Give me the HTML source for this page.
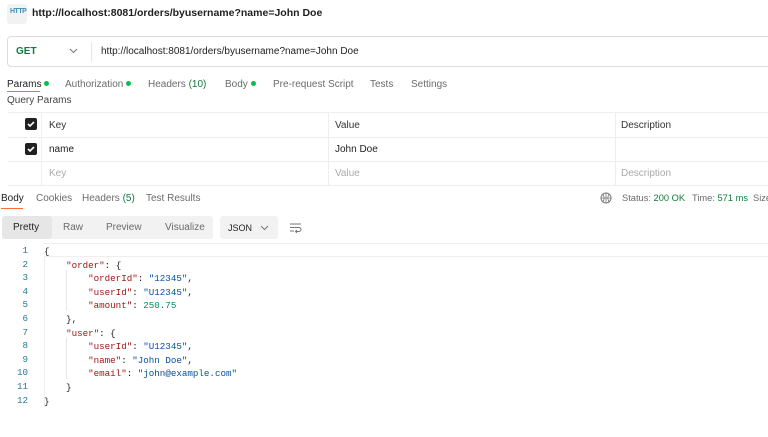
<!DOCTYPE html>
<html><head><meta charset="utf-8"><style>
*{margin:0;padding:0;box-sizing:border-box}
body{width:768px;height:437px;overflow:hidden;background:#fff;font-family:"Liberation Sans",sans-serif;font-size:10px;color:#212121;position:relative}
.a{position:absolute;white-space:nowrap}
.g{color:#6b6b6b}
.dot{display:inline-block;width:5px;height:5px;border-radius:50%;background:#0cbb52;margin-left:3px;vertical-align:1px}
.cb{position:absolute;width:12px;height:12px;background:#212121;border-radius:2px}
.cb svg{position:absolute;left:1px;top:1px}
.code{font-family:"Liberation Mono",monospace;font-size:9.2px;white-space:pre}
.k{color:#a31515}.s{color:#0451a5}.n{color:#098658}
.ln{position:absolute;width:28px;text-align:right;color:#237893;font-family:"Liberation Mono",monospace;font-size:9.2px}
</style></head><body>
<div class="a" style="left:7px;top:4px;width:20px;height:20px;background:#f2f2f2;border-radius:3px"></div>
<div class="a" style="left:10px;top:8px;font-size:7px;font-weight:bold;color:#3a8fb7;letter-spacing:-0.5px">HTTP</div>
<div class="a" style="left:32px;top:7px;font-size:10.5px;font-weight:bold">http://localhost:8081/orders/byusername?name=John Doe</div>

<div class="a" style="left:7px;top:36px;width:770px;height:31px;border:1px solid #dcdcdc;border-radius:4px"></div>
<div class="a" style="left:16px;top:46px;font-weight:bold;color:#0f7b3d">GET</div>
<svg class="a" style="left:69px;top:48px" width="9" height="6"><path d="M1 1l3.5 3.5L8 1" stroke="#777" fill="none"/></svg>
<div class="a" style="left:91px;top:42px;width:1px;height:20px;background:#e5e5e5"></div>
<div class="a" style="left:101px;top:46px">http://localhost:8081/orders/byusername?name=John Doe</div>

<div class="a" style="left:7px;top:79px">Params<span class="dot"></span></div>
<div class="a g" style="left:65px;top:79px">Authorization<span class="dot"></span></div>
<div class="a g" style="left:148px;top:79px">Headers <span style="color:#0f7b3d">(10)</span></div>
<div class="a g" style="left:225px;top:79px">Body<span class="dot"></span></div>
<div class="a g" style="left:273px;top:79px">Pre-request Script</div>
<div class="a g" style="left:370px;top:79px">Tests</div>
<div class="a g" style="left:411px;top:79px">Settings</div>
<div class="a" style="left:7px;top:91px;width:33px;height:1px;background:#ff6c37"></div>
<div class="a" style="left:7px;top:95px;color:#444">Query Params</div>

<div class="a" style="left:8px;top:112px;width:770px;height:74px;border-top:1px solid #eee;border-bottom:1px solid #eee"></div>
<div class="a" style="left:8px;top:137px;width:770px;height:1px;background:#eee"></div>
<div class="a" style="left:8px;top:161px;width:770px;height:1px;background:#eee"></div>
<div class="a" style="left:41px;top:112px;width:1px;height:74px;background:#eee"></div>
<div class="a" style="left:328px;top:112px;width:1px;height:74px;background:#eee"></div>
<div class="a" style="left:615px;top:112px;width:1px;height:74px;background:#eee"></div>
<div class="cb" style="left:25px;top:118px"><svg width="10" height="10"><path d="M2 5l2 2 4-4" stroke="#fff" stroke-width="1.6" fill="none"/></svg></div>
<div class="cb" style="left:25px;top:143px"><svg width="10" height="10"><path d="M2 5l2 2 4-4" stroke="#fff" stroke-width="1.6" fill="none"/></svg></div>
<div class="a" style="left:49px;top:120px;color:#333">Key</div>
<div class="a" style="left:335px;top:120px;color:#333">Value</div>
<div class="a" style="left:621px;top:120px;color:#333">Description</div>
<div class="a" style="left:49px;top:144px">name</div>
<div class="a" style="left:335px;top:144px">John Doe</div>
<div class="a" style="left:49px;top:168px;color:#aaa">Key</div>
<div class="a" style="left:335px;top:168px;color:#aaa">Value</div>
<div class="a" style="left:621px;top:168px;color:#aaa">Description</div>

<div class="a" style="left:1px;top:193px">Body</div>
<div class="a g" style="left:36px;top:193px">Cookies</div>
<div class="a g" style="left:82px;top:193px">Headers <span style="color:#0f7b3d">(5)</span></div>
<div class="a g" style="left:146px;top:193px">Test Results</div>
<div class="a" style="left:1px;top:208px;width:22px;height:1px;background:#ff6c37"></div>
<svg class="a" style="left:600px;top:192px" width="12" height="12" viewBox="0 0 12 12"><circle cx="6" cy="6" r="5" fill="none" stroke="#777"/><path d="M1 6h10M6 1v10M3 2.5c1.5 2 1.5 5 0 7M9 2.5c-1.5 2-1.5 5 0 7" stroke="#777" fill="none" stroke-width="0.8"/></svg>
<div class="a g" style="left:622px;top:193px;font-size:9.3px">Status: <span style="color:#0f7b3d">200 OK</span></div>
<div class="a g" style="left:692px;top:193px;font-size:9.3px">Time: <span style="color:#0f7b3d">571 ms</span></div>
<div class="a g" style="left:753px;top:193px;font-size:9.3px">Size</div>

<div class="a" style="left:2px;top:216px;width:211px;height:23px;background:#f2f2f2;border-radius:3px"></div>
<div class="a" style="left:2px;top:216px;width:50px;height:23px;background:#e6e6e6;border-radius:3px"></div>
<div class="a" style="left:13px;top:222px;color:#222">Pretty</div>
<div class="a g" style="left:63px;top:222px">Raw</div>
<div class="a g" style="left:106px;top:222px">Preview</div>
<div class="a g" style="left:165px;top:222px">Visualize</div>
<div class="a" style="left:220px;top:216px;width:58px;height:23px;background:#f2f2f2;border-radius:3px"></div>
<div class="a" style="left:228px;top:223px;font-size:9px;color:#222">JSON</div>
<svg class="a" style="left:260px;top:225px" width="9" height="6"><path d="M1 1l3.5 3.5L8 1" stroke="#777" fill="none"/></svg>
<svg class="a" style="left:289px;top:222px" width="13" height="11"><path d="M1 2h11M1 5.5h9a2 2 0 0 1 0 4H7M1 9h4M8 8l-1.5 1.5L8 11" stroke="#777" fill="none"/></svg>

<div class="a" style="left:44px;top:243px;width:730px;height:14px;border-top:1px solid #eee;border-bottom:1px solid #eee"></div>
<div class="a" style="left:44px;top:257px;width:1px;height:150px;background:#eee"></div>
<div class="a" style="left:66px;top:270px;width:1px;height:41px;background:#e6e6e6"></div>
<div class="a" style="left:66px;top:338px;width:1px;height:41px;background:#e6e6e6"></div>
<div class="ln" style="left:0;top:245px">1</div>
<div class="ln" style="left:0;top:258.6px">2</div>
<div class="ln" style="left:0;top:272.2px">3</div>
<div class="ln" style="left:0;top:285.8px">4</div>
<div class="ln" style="left:0;top:299.4px">5</div>
<div class="ln" style="left:0;top:313px">6</div>
<div class="ln" style="left:0;top:326.6px">7</div>
<div class="ln" style="left:0;top:340.2px">8</div>
<div class="ln" style="left:0;top:353.8px">9</div>
<div class="ln" style="left:0;top:367.4px">10</div>
<div class="ln" style="left:0;top:381px">11</div>
<div class="ln" style="left:0;top:394.6px">12</div>
<pre class="a code" style="left:44px;top:245px;line-height:13.6px">{
    <span class="k">"order"</span>: {
        <span class="k">"orderId"</span>: <span class="s">"12345"</span>,
        <span class="k">"userId"</span>: <span class="s">"U12345"</span>,
        <span class="k">"amount"</span>: <span class="n">250.75</span>
    },
    <span class="k">"user"</span>: {
        <span class="k">"userId"</span>: <span class="s">"U12345"</span>,
        <span class="k">"name"</span>: <span class="s">"John Doe"</span>,
        <span class="k">"email"</span>: <span class="s">"john@example.com"</span>
    }
}</pre>
</body></html>
